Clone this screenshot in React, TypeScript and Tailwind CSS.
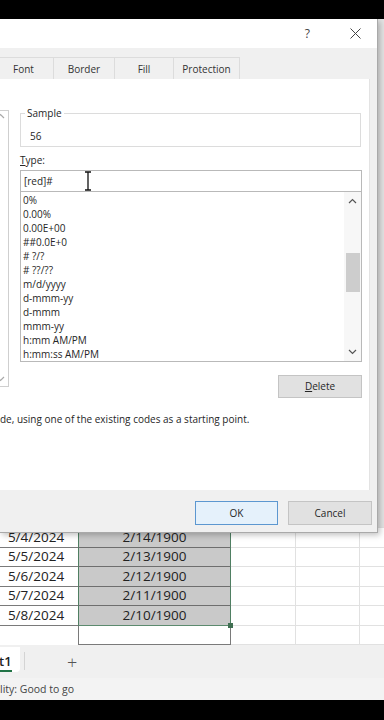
const formats = [
  "0%",
  "0.00%",
  "0.00E+00",
  "##0.0E+0",
  "# ?/?",
  "# ??/??",
  "m/d/yyyy",
  "d-mmm-yy",
  "d-mmm",
  "mmm-yy",
  "h:mm AM/PM",
  "h:mm:ss AM/PM",
];

const rows = [
  ["5/4/2024", "2/14/1900"],
  ["5/5/2024", "2/13/1900"],
  ["5/6/2024", "2/12/1900"],
  ["5/7/2024", "2/11/1900"],
  ["5/8/2024", "2/10/1900"],
];

function Chevron({ up }: { up?: boolean }) {
  return (
    <svg width="9" height="6" viewBox="0 0 9 6" className="block">
      <polyline
        points={up ? "1,5 4.5,1.5 8,5" : "1,1 4.5,4.5 8,1"}
        fill="none"
        stroke="#555"
        strokeWidth="1.2"
      />
    </svg>
  );
}

function Tab({ label, w, pr = 0 }: { label: string; w: string; pr?: number }) {
  return (
    <div
      className={`${w} h-[22px] flex items-center justify-center pt-[2px] border-r border-t border-[#dcdcdc] text-[10px] text-[#333]`}
      style={{ paddingRight: pr }}
    >
      {label}
    </div>
  );
}

function FormatDialog() {
  return (
    <div className="absolute left-0 top-[19px] w-[378px] h-[514px] flex flex-col bg-[#f0f0f0] border-r border-b border-[#a9a9a9] shadow-[2px_2px_6px_rgba(0,0,0,0.25)] font-['Open_Sans',sans-serif] text-[#262626]">
      {/* title bar */}
      <div className="h-[29px] bg-white flex items-center justify-end">
        <span className="text-[12px] text-[#444] mr-[40px]">?</span>
        <svg width="11" height="11" viewBox="0 0 11 11" className="mr-[16px]">
          <path d="M0.5 0.5 L10.5 10.5 M10.5 0.5 L0.5 10.5" stroke="#444" strokeWidth="1" />
        </svg>
      </div>

      {/* tabs */}
      <div className="h-[31px] flex items-end">
        <Tab label="Font" w="w-[54px]" pr={6} />
        <Tab label="Border" w="w-[61px]" />
        <Tab label="Fill" w="w-[59px]" />
        <Tab label="Protection" w="w-[66px]" />
      </div>

      {/* panel */}
      <div className="w-[370px] h-[411px] bg-white border-r border-[#e3e3e3] flex flex-col">
        <div className="flex items-start">
          {/* category list, cut off */}
          <div className="mt-[31px] w-[9px] h-[277px] border-y border-r border-[#cfcfcf] flex flex-col justify-between overflow-hidden">
            <div className="-ml-[4px] mt-[2px] opacity-50">
              <Chevron up />
            </div>
            <div className="-ml-[4px] mb-[4px] opacity-50">
              <Chevron />
            </div>
          </div>

          <div className="ml-[11px] mt-[34px] w-[342px] flex flex-col">
            <div className="relative h-[34px] border border-[#dcdcdc] w-[341px]">
              <span className="absolute -top-[7px] left-[4px] bg-white px-[2px] text-[10px] leading-[12px]">
                Sample
              </span>
              <div className="pl-[9px] pt-[15px] text-[10px] leading-[14px]">56</div>
            </div>

            <div className="mt-[7px] text-[10px] leading-[12px]">
              <span className="underline">T</span>ype:
            </div>

            <div className="relative mt-[4px] h-[22px] border border-[#b9b9b9] flex items-center pl-[3px] text-[10px]">
              [red]#
              <svg width="8" height="20" viewBox="0 0 8 20" className="absolute left-[63px] top-[0px]">
                <path d="M1 1 H7 M4 1 V19 M1 19 H7" stroke="#111" strokeWidth="1.3" fill="none" />
              </svg>
            </div>

            <div className="h-[170px] border-x border-b border-[#b9b9b9] flex">
              <div className="flex-1 pl-[2px] pt-[1px] text-[10px] leading-[14px] overflow-hidden">
                {formats.map((f) => (
                  <div key={f} className="whitespace-pre">
                    {f}
                  </div>
                ))}
              </div>
              <div className="w-[17px] bg-[#f7f7f7] flex flex-col items-center">
                <div className="mt-[6px]">
                  <Chevron up />
                </div>
                <div className="mt-[49px] w-[14px] h-[39px] bg-[#cdcdcd]" />
                <div className="mt-auto mb-[6px]">
                  <Chevron />
                </div>
              </div>
            </div>

            <div className="mt-[13px] self-end w-[84px] h-[23px] bg-[#e1e1e1] border border-[#c4c4c4] flex items-center justify-center text-[10px]">
              <span className="underline">D</span>elete
            </div>
          </div>
        </div>

        <div className="mt-[15px] text-[10px] leading-[12px] whitespace-nowrap">
          de, using one of the existing codes as a starting point.
        </div>
      </div>

      {/* buttons */}
      <div className="flex-1 flex justify-end items-start pt-[11px] pr-[5px] gap-[10px]">
        <div className="w-[83px] h-[24px] bg-[#e5f1fb] border border-[#5c97d0] flex items-center justify-center text-[10px]">
          OK
        </div>
        <div className="w-[84px] h-[24px] bg-[#e1e1e1] border border-[#c4c4c4] flex items-center justify-center text-[10px]">
          Cancel
        </div>
      </div>
    </div>
  );
}

function GridCells() {
  return (
    <>
      <div className="w-[65px] border-r border-b border-[#e1e1e1]" />
      <div className="w-[64px] border-r border-b border-[#e1e1e1]" />
      <div className="flex-1 border-b border-[#e1e1e1]" />
    </>
  );
}

export default function App() {
  return (
    <div className="relative w-[384px] h-[720px] overflow-hidden bg-black font-['Open_Sans',sans-serif]">
      <div className="h-[19px] bg-black" />

      {/* sheet */}
      <div className="h-[626px] bg-white flex flex-col justify-end text-[13.5px] text-[#222]">
        <div className="flex-1 flex border-b border-[#e1e1e1]">
          <div className="w-[231px]" />
          <div className="w-[65px] border-r border-[#e1e1e1]" />
          <div className="w-[64px] border-r border-[#e1e1e1]" />
          <div className="flex-1 bg-[#e4e4e4]" />
        </div>
        {rows.map(([a, b], i) => (
          <div key={a} className="h-[19.5px] flex">
            <div className="w-[78px] pr-[6px] border-b border-[#7a7a7a] flex items-center justify-center leading-none">
              {a}
            </div>
            <div
              className={`relative w-[153px] bg-[#c9c9c9] border-b border-x flex items-center justify-center leading-none ${
                i === 4 ? "border-b-[#5c8a6e]" : "border-b-[#6e6e6e]"
              } border-x-[#4f7f62]`}
            >
              {b}
              {i === 4 && (
                <div className="absolute -right-[3px] -bottom-[3px] w-[5px] h-[5px] bg-[#3f6f52]" />
              )}
            </div>
            <GridCells />
          </div>
        ))}
        <div className="h-[19.5px] flex">
          <div className="w-[78px]" />
          <div className="w-[153px] border-x border-b border-[#7a7a7a]" />
          <GridCells />
        </div>
      </div>

      {/* sheet tabs */}
      <div className="h-[33px] bg-[#f0f0f0] flex items-start">
        <div className="mt-[2px] w-[20px] h-[25px] bg-white rounded-br-[4px] flex flex-col justify-end">
          <span className="text-[13px] leading-[14px] font-semibold text-[#1f1f1f] -ml-[1px]">t1</span>
          <div className="w-[12px] h-[2px] bg-[#217346] mt-[2px]" />
        </div>
        <div className="ml-[4px] mt-[7px] w-px h-[18px] bg-[#d4d4d4]" />
        <span className="ml-[42px] mt-[8px] text-[18px] leading-[18px] font-light text-[#555]">+</span>
      </div>

      {/* status bar */}
      <div className="h-[22px] bg-[#f3f3f3] flex items-center pt-[2px] text-[10.5px] text-[#444]">
        lity: Good to go
      </div>

      <FormatDialog />
    </div>
  );
}
